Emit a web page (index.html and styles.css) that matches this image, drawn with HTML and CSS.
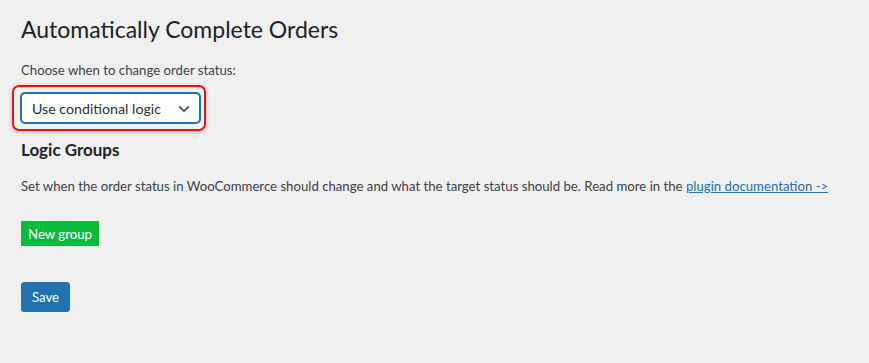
FILE: index.html
```html
<!DOCTYPE html>
<html lang="en">
<head>
<meta charset="utf-8">
<title>Automatically Complete Orders</title>
<link rel="stylesheet" href="styles.css">
</head>
<body>
<div class="wrap">
  <h1 class="title">Automatically Complete Orders</h1>
  <p class="label">Choose when to change order status:</p>
  <div class="highlight">
    <div class="select">
      <span class="select-text">Use conditional logic</span>
      <svg class="chevron" width="12" height="8" viewBox="0 0 12 8" aria-hidden="true">
        <path d="M1.5 1.8 L6 6 L10.5 1.8" fill="none" stroke="#50575e" stroke-width="1.8" stroke-linecap="round" stroke-linejoin="round"/>
      </svg>
    </div>
  </div>
  <h2 class="section">Logic Groups</h2>
  <p class="desc">Set when the order status in WooCommerce should change and what the target status should be. Read more in the <a class="link" href="#">plugin documentation -&gt;</a></p>
  <div class="actions">
    <button class="btn-new" type="button">New group</button>
  </div>
  <div class="submit">
    <button class="btn-save" type="button">Save</button>
  </div>
</div>
</body>
</html>
```
FILE: styles.css
```css
html, body {
  margin: 0;
  padding: 0;
  background: #f0f0f1;
}
body {
  font-family: Lato, "Open Sans", sans-serif;
  color: #3c434a;
  font-size: 13.2px;
}
.wrap {
  padding: 13px 20px 0 21px;
  display: flex;
  flex-direction: column;
  align-items: flex-start;
}
.title {
  font-size: 23px;
  font-weight: 400;
  color: #1d2327;
  margin: 0;
  line-height: 32px;
}
.label {
  margin: 15px 0 0;
  line-height: 20px;
}
.highlight {
  margin: 5px 0 0 -9px;
  padding: 6px 4px 6px 7px;
  border: 2px solid #f01010;
  border-radius: 7px;
  box-shadow: 0 1px 4px rgba(0, 0, 0, 0.22);
  display: flex;
}
.select {
  box-sizing: border-box;
  width: 179px;
  height: 30px;
  background: #fff;
  border: 1px solid #2271b1;
  box-shadow: 0 0 0 1px #2271b1;
  border-radius: 4px;
  display: flex;
  align-items: center;
  justify-content: space-between;
  padding: 0 9px 0 10px;
  color: #2c3338;
  font-size: 14.2px;
}
.chevron {
  display: block;
  margin-top: 1px;
}
.section {
  font-size: 17px;
  font-weight: 700;
  color: #1d2327;
  margin: 7px 0 0;
  line-height: 24px;
}
.desc {
  margin: 14px 0 0;
  line-height: 20px;
  white-space: nowrap;
}
.link {
  color: #2271b1;
  text-decoration: underline;
}
.actions {
  margin-top: 25px;
}
.btn-new {
  font-family: inherit;
  font-size: 13.2px;
  height: 25px;
  width: 78px;
  padding: 0;
  border: 0;
  border-radius: 0;
  background: #0abc3e;
  color: #fff;
  cursor: pointer;
}
.submit {
  margin-top: 36px;
}
.btn-save {
  font-family: inherit;
  font-size: 13.2px;
  height: 30px;
  width: 49px;
  padding: 0;
  border: 1px solid #2271b1;
  border-radius: 3px;
  background: #2271b1;
  color: #fff;
  cursor: pointer;
}
```
